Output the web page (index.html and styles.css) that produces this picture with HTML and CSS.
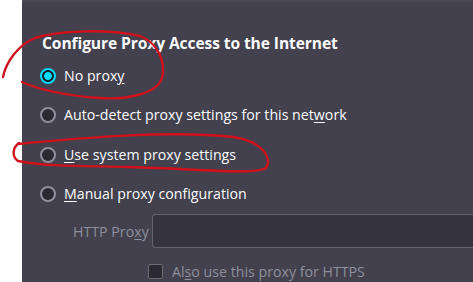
FILE: index.html
```html
<!DOCTYPE html>
<html>
<head>
<meta charset="utf-8">
<link rel="stylesheet" href="styles.css">
</head>
<body>
<div class="wrap">
  <div class="gutter"></div>
  <div class="panel">
    <h1 class="title">Configure Proxy Access to the Internet</h1>
    <div class="row">
      <span class="radio checked"></span>
      <span class="label">No prox<u>y</u></span>
    </div>
    <div class="row">
      <span class="radio"></span>
      <span class="label">Auto-detect proxy settings for this net<u>w</u>ork</span>
    </div>
    <div class="row">
      <span class="radio"></span>
      <span class="label"><u>U</u>se system proxy settings</span>
    </div>
    <div class="row">
      <span class="radio"></span>
      <span class="label"><u>M</u>anual proxy configuration</span>
    </div>
    <div class="field-row">
      <span class="field-label">HTTP Pro<u>x</u>y</span>
      <span class="field"></span>
    </div>
    <div class="check-row">
      <span class="checkbox"></span>
      <span class="check-label">Al<u>s</u>o use this proxy for HTTPS</span>
    </div>
  </div>
</div>
<svg class="marks" width="473" height="282" viewBox="0 0 473 282">
  <path d="M3,77 C6,62 18,45 35,38 C60,30 110,29 140,36 C158,43 166,62 162,78 C157,94 126,100 100,98 C70,96 40,90 22,82" />
  <path d="M18,144 C80,138 170,130 233,137 C262,141 273,158 266,168 C255,175 200,169 130,167 C80,166 40,166 18,161 C12,157 12,148 19,143" />
</svg>
</body>
</html>
```
FILE: styles.css
```css
html, body {
  margin: 0;
  padding: 0;
  background: #ffffff;
}
body {
  width: 473px;
  height: 282px;
  overflow: hidden;
  position: relative;
  font-family: "Open Sans", "Noto Sans", sans-serif;
}
.wrap {
  display: flex;
  height: 282px;
}
.gutter {
  width: 22px;
  flex: none;
  background: #ffffff;
}
.panel {
  flex: 1;
  background: #42414d;
  border-top: 2px solid #4a4955;
  padding: 30px 0 0 18px;
  color: #fbfbfe;
  overflow: hidden;
}
.title {
  margin: 0 0 2px 2px;
  font-size: 15.6px;
  font-weight: 700;
  line-height: 22px;
  letter-spacing: -0.1px;
}
.row {
  height: 39.5px;
  display: flex;
  align-items: center;
  gap: 8px;
}
.radio {
  width: 16px;
  height: 16px;
  box-sizing: border-box;
  border-radius: 50%;
  border: 2px solid #8f8f9d;
  background: #2b2a33;
  flex: none;
}
.radio.checked {
  border-color: #00ddff;
  background: radial-gradient(circle, #00ddff 0 3.6px, #1c1b22 4.2px);
}
.label {
  font-size: 14.2px;
  line-height: 18px;
}
u {
  text-decoration-thickness: 1px;
  text-underline-offset: 2px;
}
.field-row {
  display: flex;
  align-items: center;
  padding-left: 33px;
  height: 34px;
}
.field-label {
  flex: 0 0 79px;
  color: #8f8f9d;
  font-size: 14.2px;
  white-space: nowrap;
}
.field {
  flex: 1;
  height: 34px;
  box-sizing: border-box;
  border: 1px solid #66656f;
  border-right: none;
  border-radius: 4px 0 0 4px;
  background: #35343c;
}
.check-row {
  display: flex;
  align-items: center;
  gap: 9px;
  padding-left: 108px;
  margin-top: 14px;
}
.checkbox {
  width: 15px;
  height: 15px;
  box-sizing: border-box;
  border: 1px solid #6c6b76;
  border-radius: 2px;
  background: #2b2a33;
  flex: none;
}
.check-label {
  color: #8f8f9d;
  font-size: 14.2px;
}
.marks {
  position: absolute;
  left: 0;
  top: 0;
  pointer-events: none;
}
.marks path {
  fill: none;
  stroke: #d0101c;
  stroke-width: 2.4;
  stroke-linecap: round;
}
```
